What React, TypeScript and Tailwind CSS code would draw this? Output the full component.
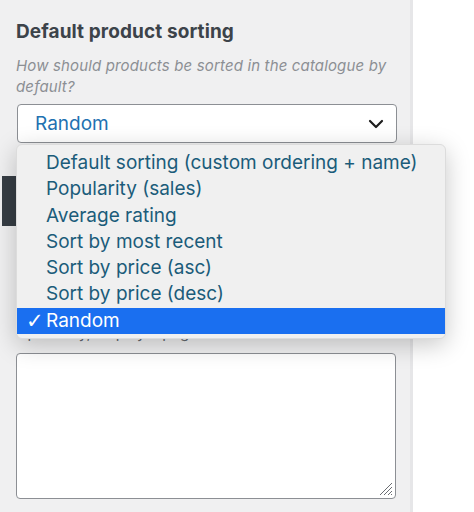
import React from "react";

const items = [
  "Default sorting (custom ordering + name)",
  "Popularity (sales)",
  "Average rating",
  "Sort by most recent",
  "Sort by price (asc)",
  "Sort by price (desc)",
  "Random",
];

export default function App() {
  return (
    <div
      className="relative flex h-[512px] w-[474px] overflow-hidden bg-white"
      style={{ fontFamily: "Inter, 'Noto Sans', sans-serif" }}
    >
      <div className="flex w-[413px] shrink-0 flex-col border-r-[3px] border-[#e6e6e8] bg-[#f0f0f1] px-4 pt-[20px]">
        <h2 className="text-[19px] font-bold leading-[24px] tracking-[0.1px] text-[#3c434a]">
          Default product sorting
        </h2>
        <p className="mt-[11px] text-[15px] italic leading-[21px] tracking-[0.15px] text-[#8c8f94]">
          How should products be sorted in the catalogue by default?
        </p>
        <div className="mt-[7px] ml-[1px] flex h-[39px] w-[380px] items-center justify-between rounded-[4px] border border-[#8c8f94] bg-white pl-[17px] pr-[12px]">
          <span className="text-[19px] leading-[24px] text-[#2271b1]">Random</span>
          <svg width="16" height="10" viewBox="0 0 16 10" fill="none">
            <path d="M2 2l6 6 6-6" stroke="#1e1e1e" strokeWidth="2.2" strokeLinecap="round" strokeLinejoin="round" />
          </svg>
        </div>
        <div className="-ml-[14px] mt-[33px] h-[50px] w-[200px] bg-[#363d44]" />
        <p className="mt-[96px] text-[15px] leading-[21px] text-[#646970]">
          Optionally, display a page
        </p>
        <div className="relative mt-[10px] h-[146px] w-[380px] rounded-[4px] border border-[#8c8f94] bg-white">
          <svg className="absolute bottom-[2px] right-[2px]" width="14" height="14" viewBox="0 0 14 14">
            <path d="M13 1L1 13M13 5L5 13M13 9L9 13M13 12L12 13" stroke="#6b6e73" strokeWidth="1" />
          </svg>
        </div>
      </div>

      <div className="absolute left-[16px] top-[144px] w-[430px] rounded-[6px] border border-[#dcdcdc] bg-[#f0f0f0] pt-[5px] pb-[4px] shadow-[0_6px_24px_rgba(0,0,0,0.22)]">
        {items.map((it, i) => {
          const sel = it === "Random";
          return (
            <div
              key={i}
              className={`relative h-[26.3px] pl-[29px] text-[19px] leading-[26.3px] ${
                sel ? "bg-[#1a6ff0] text-white" : "text-[#1b5c7a]"
              }`}
            >
              {sel && (
                <span
                  className="absolute left-[9px] top-0 text-[21px] font-bold"
                  style={{ fontFamily: "'DejaVu Sans', sans-serif" }}
                >
                  ✓
                </span>
              )}
              {it}
            </div>
          );
        })}
      </div>
    </div>
  );
}
